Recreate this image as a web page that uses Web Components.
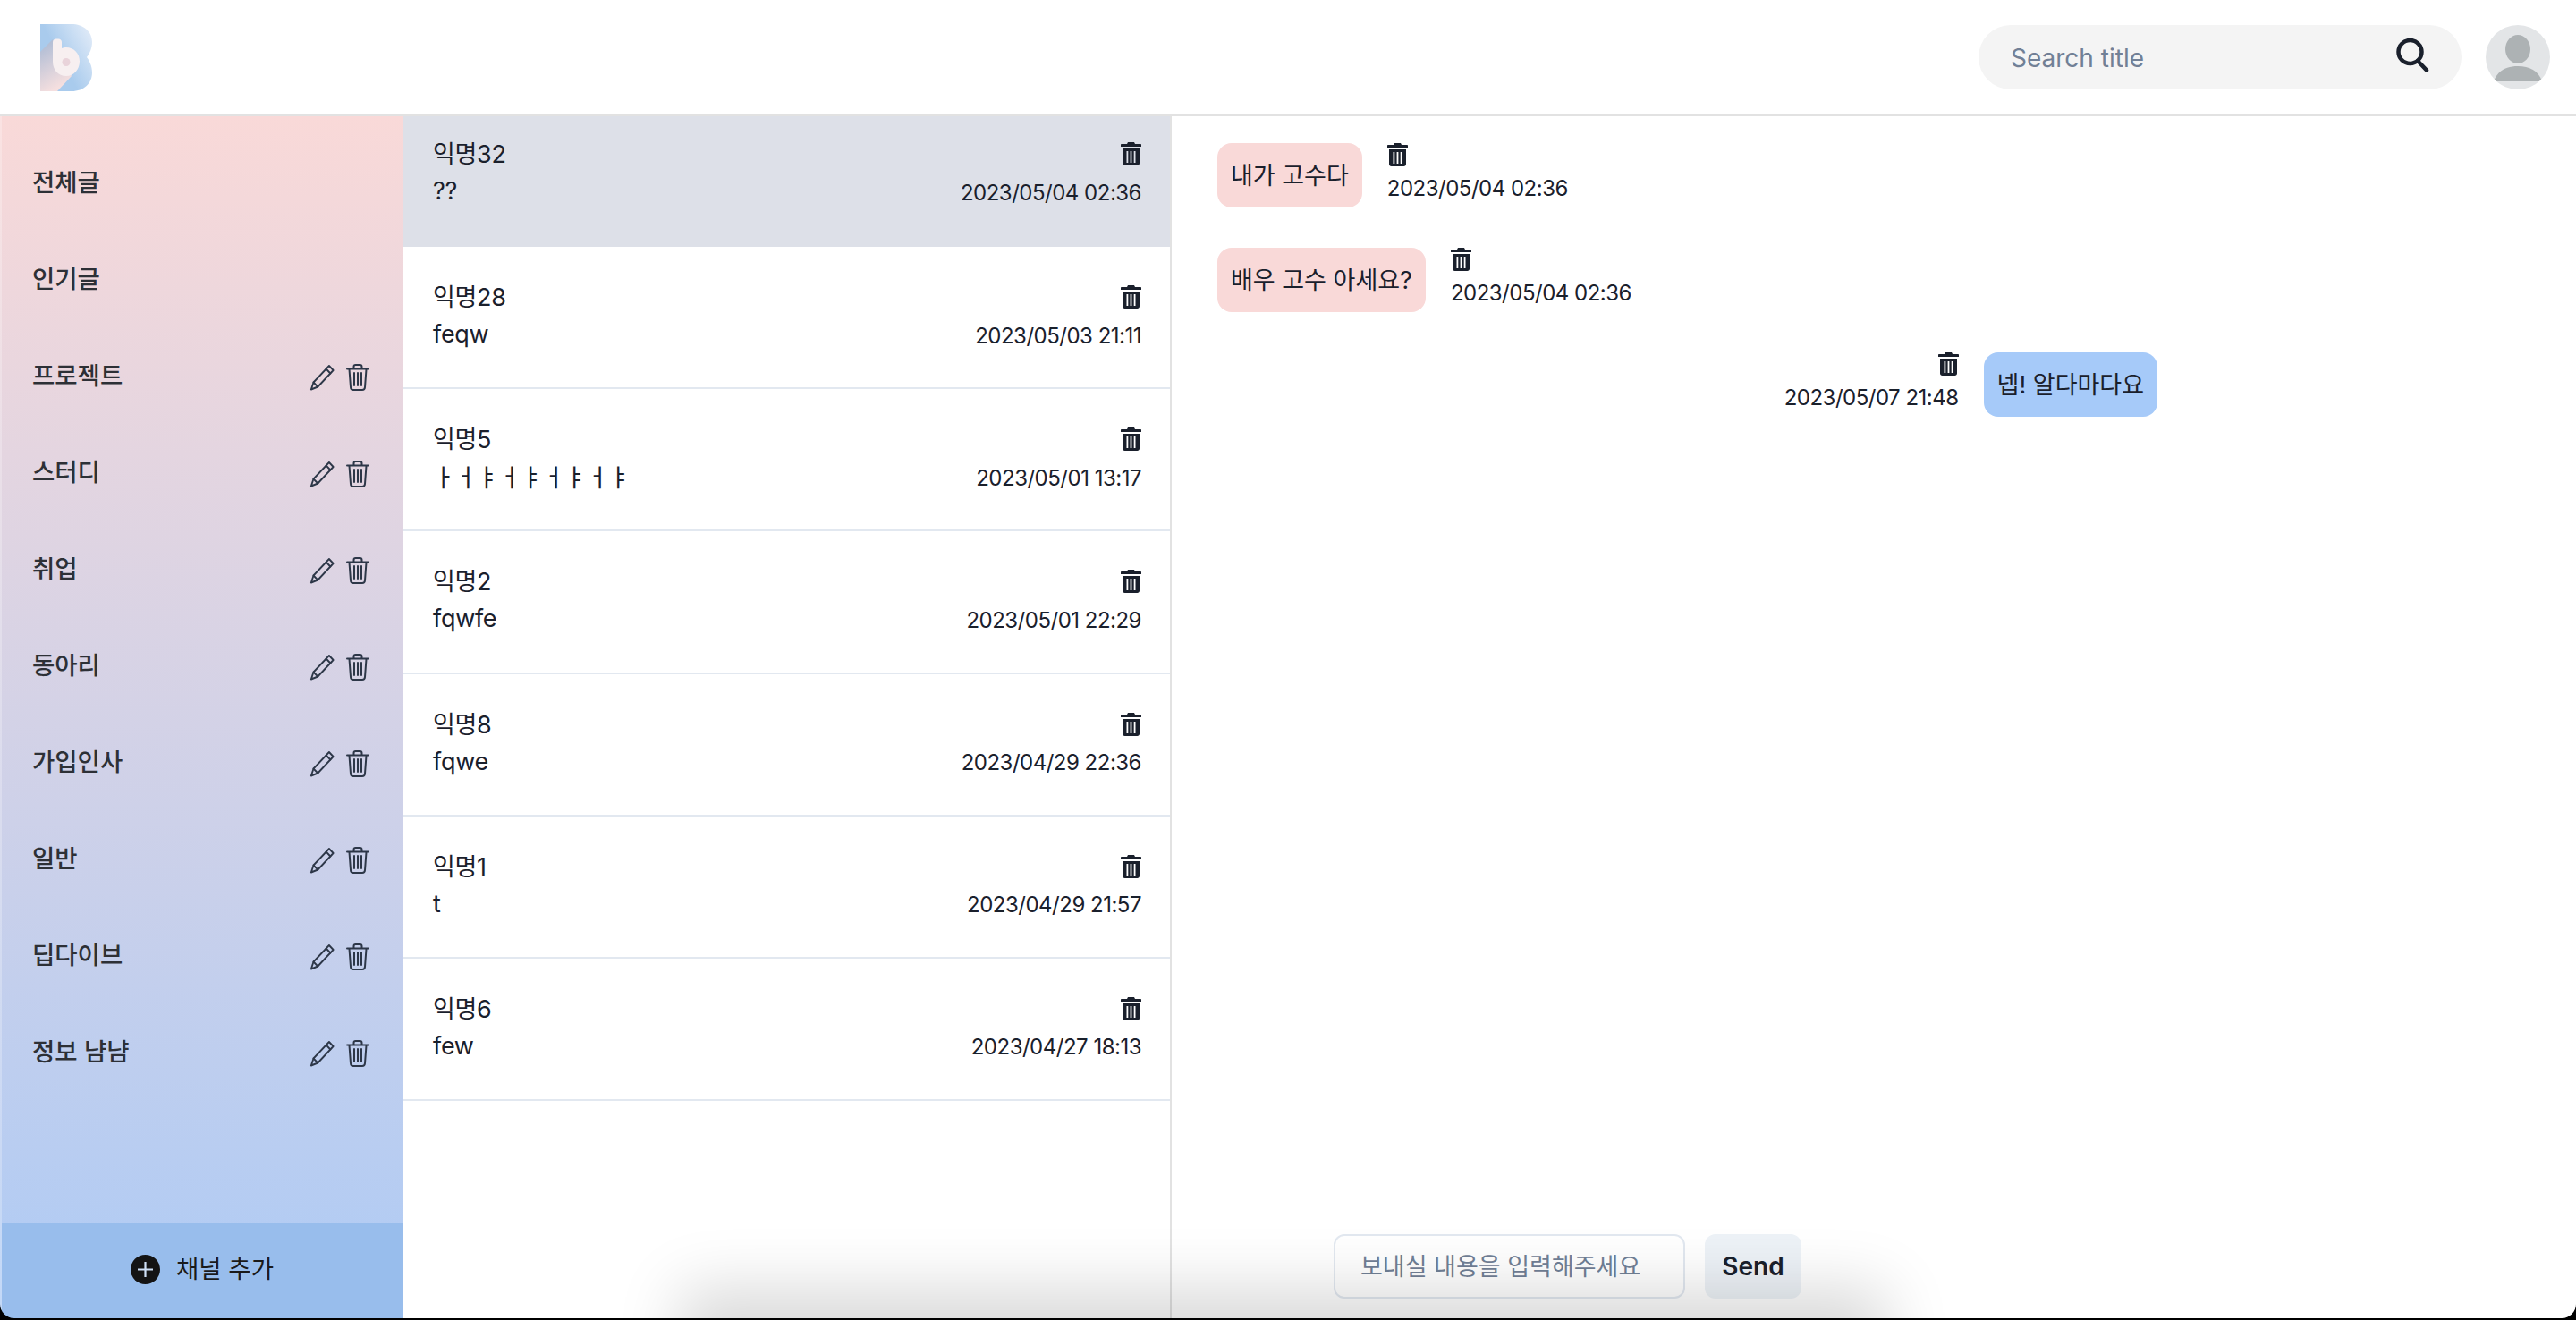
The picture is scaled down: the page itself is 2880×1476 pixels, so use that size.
<!DOCTYPE html>
<html lang="ko">
<head>
<meta charset="utf-8">
<title>board</title>
<style>
  html, body { margin: 0; height: 100%; background: #fff; overflow: hidden; }
  body { font-family: Inter, "Noto Sans CJK KR", sans-serif; color: #1a202c; }
</style>
</head>
<body>
<board-app>
  <top-bar slot="top"></top-bar>
  <side-nav slot="nav">
    <nav-item>전체글</nav-item>
    <nav-item>인기글</nav-item>
    <nav-item editable>프로젝트</nav-item>
    <nav-item editable>스터디</nav-item>
    <nav-item editable>취업</nav-item>
    <nav-item editable>동아리</nav-item>
    <nav-item editable>가입인사</nav-item>
    <nav-item editable>일반</nav-item>
    <nav-item editable>딥다이브</nav-item>
    <nav-item editable>정보 냠냠</nav-item>
  </side-nav>
  <thread-list slot="list">
    <thread-row selected title="익명32" sub="??" date="2023/05/04 02:36"></thread-row>
    <thread-row title="익명28" sub="feqw" date="2023/05/03 21:11"></thread-row>
    <thread-row title="익명5" sub="ㅏㅓㅑㅓㅑㅓㅑㅓㅑ" date="2023/05/01 13:17"></thread-row>
    <thread-row title="익명2" sub="fqwfe" date="2023/05/01 22:29"></thread-row>
    <thread-row title="익명8" sub="fqwe" date="2023/04/29 22:36"></thread-row>
    <thread-row title="익명1" sub="t" date="2023/04/29 21:57"></thread-row>
    <thread-row title="익명6" sub="few" date="2023/04/27 18:13"></thread-row>
  </thread-list>
  <chat-pane slot="chat">
    <chat-msg date="2023/05/04 02:36">내가 고수다</chat-msg>
    <chat-msg date="2023/05/04 02:36">배우 고수 아세요?</chat-msg>
    <chat-msg mine date="2023/05/07 21:48">넵! 알다마다요</chat-msg>
  </chat-pane>
</board-app>

<script>
(function(){
  const TRASH_SOLID = `<svg width="23" height="26" viewBox="0 0 23 26" fill="#1a202c"><path d="M8 0h7l1 2h6c.6 0 1 .4 1 1v2H0V3c0-.6.4-1 1-1h6z"/><path fill-rule="evenodd" d="M2 7h19v16.500c0 1.400-1.100 2.500-2.500 2.500h-14C3.100 26 2 24.900 2 23.500zM6.500 10v13h1.800V10zM10.600 10v13h1.800V10zM14.700 10v13h1.800V10z"/></svg>`;
  const PENCIL = `<svg width="28" height="30" viewBox="0 0 30 30" preserveAspectRatio="none" fill="none" stroke="#2d3748" stroke-width="2" stroke-linejoin="round" stroke-linecap="round"><path d="M23.500 2 28.500 7 10 25.500 2 28.500 4.800 20.500z"/><path d="M20 5.500 25 10.500"/><path d="M4.800 20.500 10 25.500"/></svg>`;
  const TRASH_LINE = `<svg width="26" height="30" viewBox="0 0 26 30" fill="none" stroke="#2d3748" stroke-width="2" stroke-linecap="round"><path d="M1 5.500h24"/><path d="M8.500 5V3c0-1.100.9-2 2-2h5c1.100 0 2 .9 2 2v2"/><path d="M3.500 6 5 26c.1 1.700 1.300 3 3 3h10c1.700 0 2.900-1.300 3-3l1.500-20"/><path d="M9 10v14M13 10v14M17 10v14"/></svg>`;

  class BoardApp extends HTMLElement {
    constructor(){
      super();
      this.attachShadow({mode:'open'}).innerHTML = `
        <style>
          :host{display:grid;grid-template-columns:450px 860px 1fr;grid-template-rows:130px 1fr;height:100vh;position:relative;overflow:hidden}
          .top{grid-column:1 / -1}
          .dock{position:absolute;left:790px;right:800px;bottom:-60px;height:60px;box-shadow:0 -6px 70px 30px rgba(0,0,0,.15);pointer-events:none}
          .edge{position:absolute;left:0;right:0;bottom:0;height:40px;overflow:hidden;pointer-events:none}
          .edge i{display:block;height:38px;border-radius:0 0 16px 16px;box-shadow:0 0 0 40px #000}
        </style>
        <div class="top"><slot name="top"></slot></div>
        <slot name="nav"></slot>
        <slot name="list"></slot>
        <slot name="chat"></slot>
        <div class="dock"></div>
        <div class="edge"><i></i></div>`;
    }
  }

  class TopBar extends HTMLElement {
    constructor(){
      super();
      this.attachShadow({mode:'open'}).innerHTML = `
        <style>
          :host{display:flex;align-items:center;height:130px;box-sizing:border-box;border-bottom:2px solid #e2e2e2;padding:0 29px 0 45px;background:#fff}
          .logo{display:block;margin-right:auto}
          .search{display:flex;align-items:center;justify-content:space-between;width:540px;height:72px;box-sizing:border-box;padding:0 36px;border-radius:36px;background:#f4f4f4;margin-right:27px;font-size:28px;color:#718096}
          .search span{margin-top:2px}
          .search svg{margin-top:-6px}
          .avatar{width:72px;height:72px;display:block}
        </style>
        <svg class="logo" width="58" height="75" viewBox="0 0 58 75">
          <defs>
            <linearGradient id="bg" x1="0.35" y1="0.45" x2="1" y2="0"><stop offset="0" stop-color="#a9cbed"/><stop offset="1" stop-color="#e6eef9"/></linearGradient>
            <linearGradient id="sh" x1="0" y1="0" x2="0.35" y2="1"><stop offset="0" stop-color="#a8b9d4"/><stop offset="1" stop-color="#f5dfdf"/></linearGradient>
            <clipPath id="bc"><path d="M0 0h35c13 0 23 8 23 20 0 7-3 13-6 17 3 4 6 10 6 17 0 12-9 21-23 21H0z"/></clipPath>
          </defs>
          <path fill="url(#bg)" d="M0 0h35c13 0 23 8 23 20 0 7-3 13-6 17 3 4 6 10 6 17 0 12-9 21-23 21H0z"/>
          <path fill="url(#sh)" clip-path="url(#bc)" d="M0 31 14 17 35 58 19 75H0z"/>
          <path fill="#f7eff0" d="M14 20c0-2.200 1.800-3.500 3.500-3.500h3c1.700 0 3.500 1.300 3.500 3.500v7c2-.7 3.500-1 5-1 8.500 0 15 6.500 15 15.500S37.500 58 29 58c-9 0-15-7-15-16z"/>
          <circle cx="29" cy="42.500" r="4.500" fill="#e9d3da"/>
        </svg>
        <div class="search"><span>Search title</span>
          <svg width="37" height="37" viewBox="0 0 37 37" fill="none" stroke="#1a202c" stroke-width="4.500" stroke-linecap="round"><circle cx="15.500" cy="15" r="13"/><path d="M24 25 34 35.500"/></svg>
        </div>
        <svg class="avatar" viewBox="0 0 72 72">
          <defs><clipPath id="ac"><circle cx="36" cy="36" r="36"/></clipPath></defs>
          <circle cx="36" cy="36" r="36" fill="#e3e5e7"/>
          <g clip-path="url(#ac)" fill="#adb2b4">
            <ellipse cx="36" cy="27" rx="14" ry="16"/>
            <path d="M9 63c4-12 14-17 27-17s23 5 27 17z"/>
          </g>
        </svg>`;
    }
  }

  class SideNav extends HTMLElement {
    constructor(){
      super();
      this.attachShadow({mode:'open'}).innerHTML = `
        <style>
          :host{display:flex;flex-direction:column;min-height:0;background:linear-gradient(#f9d9d8,#aecbf5);border-left:2px solid rgba(255,255,255,.25);box-sizing:border-box}
          .items{flex:1;padding-top:19px}
          .add{display:flex;align-items:center;justify-content:center;gap:18px;height:109px;padding-bottom:4px;box-sizing:border-box;background:#98bdec;font-size:27.500px;color:#1a1a1a}
          .add span{margin-bottom:5px}
        </style>
        <div class="items"><slot></slot></div>
        <div class="add">
          <svg width="33" height="33" viewBox="0 0 33 33"><circle cx="16.500" cy="16.500" r="16.500" fill="#141414"/><path d="M16.500 8v17M8 16.500h17" stroke="#cfe0f6" stroke-width="2.200"/></svg>
          <span>채널 추가</span>
        </div>`;
    }
  }

  class NavItem extends HTMLElement {
    constructor(){
      super();
      this.attachShadow({mode:'open'}).innerHTML = `
        <style>
          :host{display:flex;align-items:center;height:108px;padding:0 37px 0 34px;font-size:27.500px;font-weight:500;color:#2d3036}
          .label{flex:1;margin-bottom:2px}
          .tools{display:flex;align-items:center;gap:13px;margin-top:5px}
          svg{display:block}
        </style>
        <span class="label"><slot></slot></span>
        <span class="tools"></span>`;
    }
    connectedCallback(){
      if (this.hasAttribute('editable')) this.shadowRoot.querySelector('.tools').innerHTML = PENCIL + TRASH_LINE;
    }
  }

  class ThreadList extends HTMLElement {
    constructor(){
      super();
      this.attachShadow({mode:'open'}).innerHTML = `
        <style>:host{display:block;min-height:0;border-right:2px solid #e2e2e2;box-sizing:border-box}</style>
        <slot></slot>`;
    }
  }

  class ThreadRow extends HTMLElement {
    constructor(){
      super();
      this.attachShadow({mode:'open'}).innerHTML = `
        <style>
          :host{display:block;box-sizing:border-box;height:159.200px;padding:34px 32px 0 34px;border-bottom:2px solid #e2e8f0;font-size:27px;color:#1a202c}
          :host([selected]){height:146px;padding-top:20px;background:#dde0e8;border-bottom:0}
          .line{display:flex;justify-content:space-between;align-items:center;height:44px}
          .t{margin-bottom:3px;letter-spacing:-.3px}
          .s{margin-bottom:5px;letter-spacing:-.3px}
          .date{font-size:24px;letter-spacing:-.5px;margin-bottom:2px}
          svg{display:block}
        </style>
        <div class="line"><span class="t"></span><span class="i">${TRASH_SOLID}</span></div>
        <div class="line"><span class="s"></span><span class="date"></span></div>`;
    }
    connectedCallback(){
      const $ = s => this.shadowRoot.querySelector(s);
      $('.t').textContent = this.getAttribute('title') || '';
      $('.s').textContent = this.getAttribute('sub') || '';
      $('.date').textContent = this.getAttribute('date') || '';
      this.removeAttribute('title');
    }
  }

  class ChatPane extends HTMLElement {
    constructor(){
      super();
      this.attachShadow({mode:'open'}).innerHTML = `
        <style>
          :host{display:flex;flex-direction:column;min-height:0;box-sizing:border-box}
          .log{flex:1;display:flex;flex-direction:column;gap:45px;padding:30px 0 0 51px;width:1102px;box-sizing:border-box}
          .composer{display:flex;gap:22px;padding:0 0 24px 181px}
          .input{width:393px;height:72px;box-sizing:border-box;border:2px solid #e2e8f0;border-radius:12px;padding:0 28px 4px;display:flex;align-items:center;font-size:27px;color:#718096;white-space:nowrap}
          .send{width:108px;height:72px;border-radius:12px;background:#edf2f7;display:flex;align-items:center;justify-content:center;font-size:28px;font-weight:600;color:#1a202c}
        </style>
        <div class="log"><slot></slot></div>
        <div class="composer"><div class="input">보내실 내용을 입력해주세요</div><div class="send">Send</div></div>`;
    }
  }

  class ChatMsg extends HTMLElement {
    constructor(){
      super();
      this.attachShadow({mode:'open'}).innerHTML = `
        <style>
          :host{display:flex;gap:28px;align-items:flex-start;font-size:27px;color:#1a202c}
          :host([mine]){flex-direction:row-reverse}
          .bubble{height:72px;box-sizing:border-box;padding:0 15px 4px;display:flex;align-items:center;border-radius:16px;background:#f9d9d8;white-space:nowrap}
          :host([mine]) .bubble{background:#a6caf9}
          .meta{display:flex;flex-direction:column;align-items:flex-start;gap:10px}
          :host([mine]) .meta{align-items:flex-end}
          .date{font-size:24px;line-height:30px;letter-spacing:-.5px}
          svg{display:block}
        </style>
        <div class="bubble"><slot></slot></div>
        <div class="meta">${TRASH_SOLID}<span class="date"></span></div>`;
    }
    connectedCallback(){
      this.shadowRoot.querySelector('.date').textContent = this.getAttribute('date') || '';
    }
  }

  customElements.define('board-app', BoardApp);
  customElements.define('top-bar', TopBar);
  customElements.define('side-nav', SideNav);
  customElements.define('nav-item', NavItem);
  customElements.define('thread-list', ThreadList);
  customElements.define('thread-row', ThreadRow);
  customElements.define('chat-pane', ChatPane);
  customElements.define('chat-msg', ChatMsg);
})();
</script>
</body>
</html>
